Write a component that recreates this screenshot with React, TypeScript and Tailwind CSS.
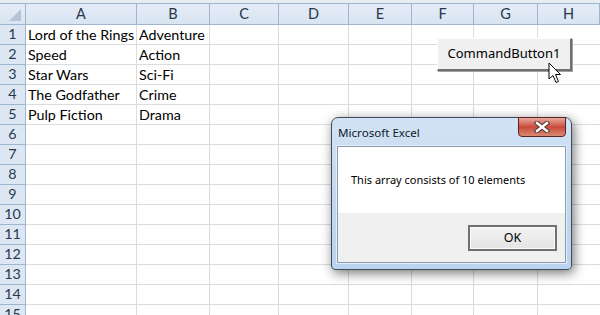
const rows: [string, string][] = [
  ["Lord of the Rings", "Adventure"],
  ["Speed", "Action"],
  ["Star Wars", "Sci-Fi"],
  ["The Godfather", "Crime"],
  ["Pulp Fiction", "Drama"],
];

const letters = ["A", "B", "C", "D", "E", "F", "G", "H"];
const rowCount = 15;

function Sheet() {
  return (
    <div className="flex flex-col" style={{ fontFamily: "Lato, 'Open Sans', sans-serif" }}>
      {/* strip above the headers */}
      <div className="h-[3px] bg-[#e8edf3] border-b border-[#9eb6ce] box-content" />

      {/* column headers */}
      <div className="grid grid-cols-[26px_111px_73px_69px_70px_63px_62px_64px_1fr] h-[21px] bg-gradient-to-b from-[#e4ecf7] to-[#d9e4f1] border-b border-[#9eb6ce] text-[14.5px] text-[#27384d]">
        <div className="relative border-r border-[#9eb6ce]">
          <div className="absolute right-[4px] bottom-[3px] w-0 h-0 border-l-[12px] border-l-transparent border-b-[12px] border-b-[#b3c4d9]" />
        </div>
        {letters.map((l) => (
          <div key={l} className="flex items-center justify-center border-r border-[#9eb6ce] leading-none">
            {l}
          </div>
        ))}
      </div>

      {/* rows */}
      {Array.from({ length: rowCount }, (_, i) => {
        const data = rows[i];
        return (
          <div
            key={i}
            className="grid grid-cols-[26px_111px_73px_69px_70px_63px_62px_64px_1fr] h-[20px] text-[14.3px]"
          >
            <div className="flex items-center justify-center bg-[#dde7f3] border-r border-b border-[#9eb6ce] text-[#27384d] leading-none">
              {i + 1}
            </div>
            <div className="flex items-center pl-[2px] pt-[1px] border-r border-b border-[#dadcdd] text-black leading-none whitespace-nowrap">
              {data ? data[0] : ""}
            </div>
            <div className="flex items-center pl-[2px] pt-[1px] border-r border-b border-[#dadcdd] text-black leading-none whitespace-nowrap">
              {data ? data[1] : ""}
            </div>
            <div className="border-r border-b border-[#dadcdd]" />
            <div className="border-r border-b border-[#dadcdd]" />
            <div className="border-r border-b border-[#dadcdd]" />
            <div className="border-r border-b border-[#dadcdd]" />
            <div className="border-r border-b border-[#dadcdd]" />
            <div className="border-b border-[#dadcdd]" />
          </div>
        );
      })}
    </div>
  );
}

function CommandButton() {
  return (
    <div
      className="absolute left-[437px] top-[38px] w-[135px] h-[33px] flex items-center justify-center bg-[#f0f0f0] border-t border-l border-[#fdfdfd] border-r-2 border-b-2 border-r-[#6f6f6f] border-b-[#6f6f6f] shadow-[1px_1px_0_#a0a0a0] text-[13px] text-black"
      style={{ fontFamily: "'Noto Sans', 'Open Sans', sans-serif" }}
    >
      CommandButton1
    </div>
  );
}

function Cursor() {
  return (
    <svg className="absolute left-[548px] top-[62px]" width="14" height="22" viewBox="0 0 14 22">
      <path
        d="M1 1 L1 17 L5 13.5 L8 20.5 L10.5 19.5 L7.5 12.5 L12.5 12.5 Z"
        fill="#fff"
        stroke="#000"
        strokeWidth="1"
        strokeLinejoin="miter"
      />
    </svg>
  );
}

function Dialog() {
  return (
    <div
      className="absolute left-[331px] top-[117px] w-[241px] h-[153px] flex flex-col rounded-t-[7px] rounded-b-[4px] border border-[#3e4d5e] bg-gradient-to-b from-[#d2e3f5] via-[#c3d8ef] to-[#bad3ee] shadow-[2px_3px_12px_rgba(0,0,0,0.55)]"
      style={{ fontFamily: "'Noto Sans', 'Open Sans', sans-serif" }}
    >
      <div className="h-[28px] flex items-center pl-[6px] pt-[2px] text-[11.6px] text-[#0f1a26]">Microsoft Excel</div>

      {/* close button */}
      <div className="absolute right-[5px] top-[-1px] w-[48px] h-[20px] rounded-b-[4px] border border-[#5b2320] bg-gradient-to-b from-[#e7aa9e] via-[#c8493b] to-[#d88a74] flex items-center justify-center">
        <svg width="16" height="12" viewBox="0 0 16 12">
          <path d="M3 2 L13 10 M13 2 L3 10" stroke="#4a3431" strokeWidth="4.5" strokeLinecap="square" />
          <path d="M3 2 L13 10 M13 2 L3 10" stroke="#fff" strokeWidth="2.5" strokeLinecap="square" />
        </svg>
      </div>

      <div className="mx-[5px] h-[117px] flex flex-col border border-[#8a9bb0] shadow-[0_0_0_1px_#e4eef9]">
        <div className="h-[66px] bg-white flex items-center pl-[13px] text-[11px] text-black">
          This array consists of 10 elements
        </div>
        <div className="flex-1 bg-[#f0f0f0] flex justify-end items-start pt-[12px] pr-[8px]">
          <div className="w-[89px] h-[26px] flex items-center justify-center border-2 border-[#707070] bg-gradient-to-b from-[#f2f2f2] to-[#e4e4e4] shadow-[inset_0_0_0_1px_#fbfbfb] text-[12.5px] text-black">
            OK
          </div>
        </div>
      </div>
    </div>
  );
}

export default function App() {
  return (
    <div className="relative w-[600px] h-[315px] overflow-hidden bg-white">
      <Sheet />
      <CommandButton />
      <Cursor />
      <Dialog />
    </div>
  );
}
